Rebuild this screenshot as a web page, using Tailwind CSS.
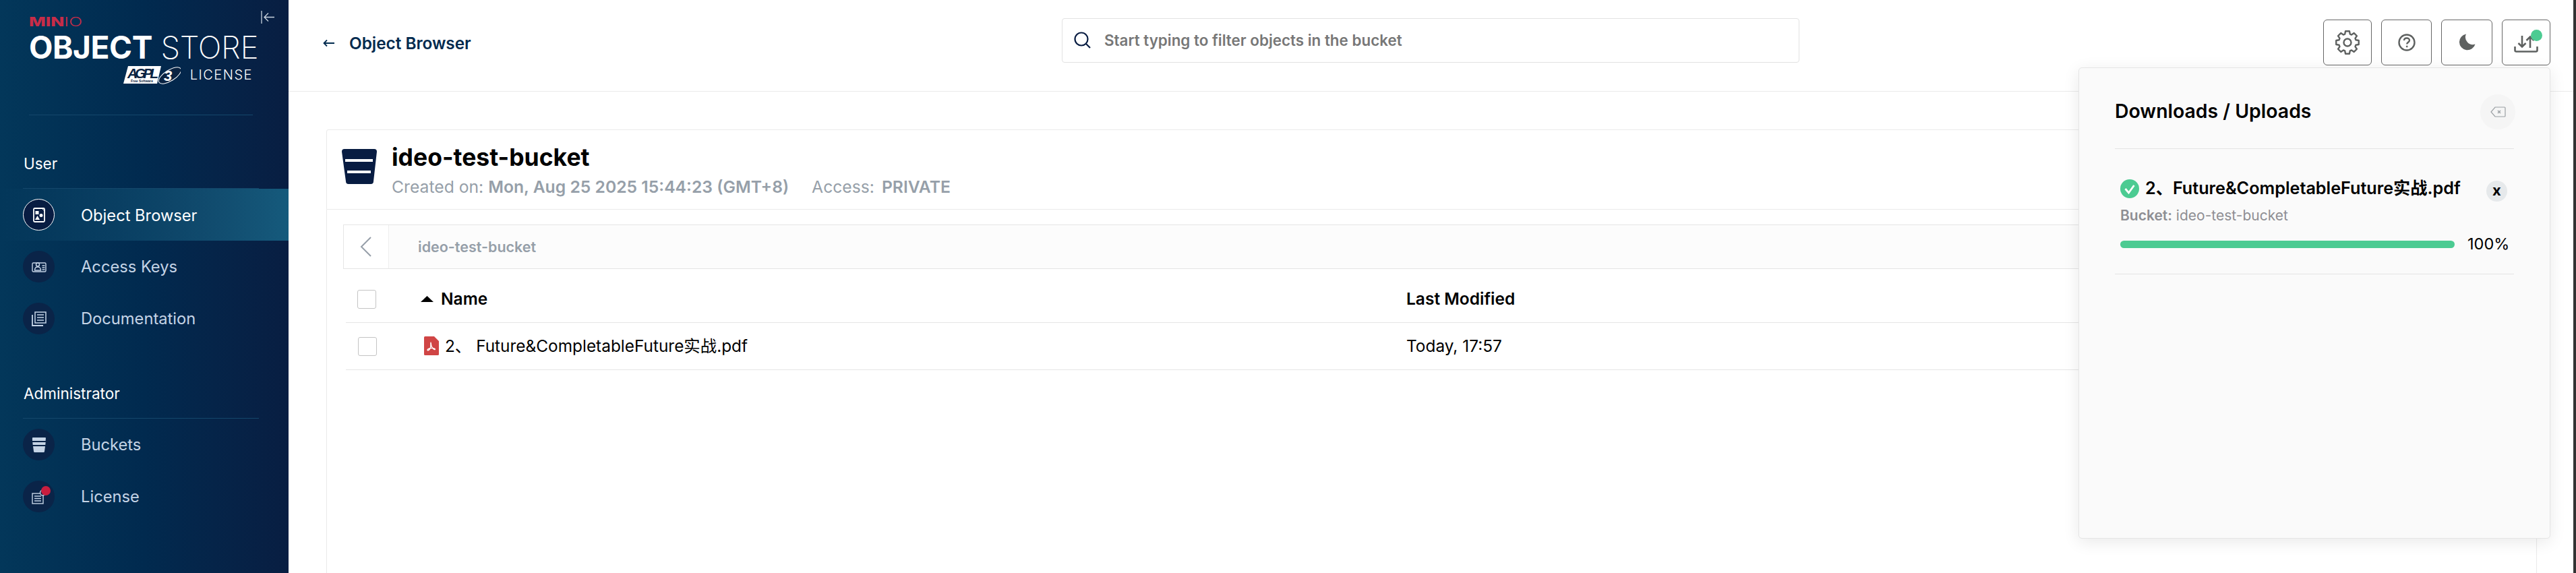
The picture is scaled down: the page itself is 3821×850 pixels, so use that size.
<!DOCTYPE html>
<html lang="en">
<head>
  <meta charset="UTF-8" />
  <title>MinIO Object Store</title>
  <script src="https://cdn.jsdelivr.net/npm/@tailwindcss/browser@4"></script>
</head>
<body class="bg-white font-['Inter','Noto_Sans_CJK_SC',sans-serif] text-black">

<div class="flex w-[3821px] h-[850px] overflow-hidden">

  <!-- SIDEBAR -->
  <aside class="relative w-[428px] h-full shrink-0 bg-linear-to-r from-[#03375a] via-[#012a4f] to-[#081e42] text-white">
    <!-- collapse -->
    <svg class="absolute left-[387px] top-[15px]" width="21" height="21" viewBox="0 0 21 21" fill="none" stroke="#c9d3de" stroke-width="1.3">
      <path d="M1 1v19M20 10.500H5M11 4.500l-6 6 6 6"/>
    </svg>

    <!-- logo -->
    <div class="ml-[43px] w-[332px] h-[171px] border-b border-[#14476b] pt-[24px]">
      <div class="h-[18px] leading-[18px] text-[19px] text-[#c72c48] origin-left scale-x-[1.38] font-extrabold whitespace-nowrap">MIN<span class="font-light">IO</span></div>
      <div class="mt-[6px] h-[44px] leading-[44px] text-[46px] whitespace-nowrap tracking-[-0.4px]"><span class="font-bold">OBJECT</span> <span class="font-extralight">STORE</span></div>
      <div class="flex justify-end items-center gap-[14px] mt-[5px]">
        <!-- AGPL badge -->
        <svg width="85" height="28" viewBox="0 0 85 28">
          <path d="M7 1H56L50 27H0Z" fill="#fff"/>
          <text x="6" y="19" font-family="Liberation Sans" font-style="italic" font-weight="700" font-size="21" fill="#0a2342" textLength="46">AGPL</text>
          <text x="11" y="25" font-family="Liberation Sans" font-weight="700" font-size="5" fill="#0a2342">Free Software</text>
          <ellipse cx="69" cy="15" rx="19" ry="8" transform="rotate(-32 69 15)" fill="#0a2342" stroke="#fff" stroke-width="1"/>
          <text x="60" y="23" font-family="Liberation Sans" font-style="italic" font-weight="700" font-size="22" fill="#fff">3</text>
        </svg>
        <span class="text-[20px] leading-[24px] tracking-[1.500px] font-light">LICENSE</span>
      </div>
    </div>

    <!-- User -->
    <div class="ml-[34px] w-[350px] h-[109px] border-b border-[#14476b] flex items-end pb-[21px] pl-[1px] text-[22.500px] leading-[30px]">User</div>

    <a class="relative flex items-center h-[77px] pl-[34px] bg-linear-to-r from-transparent to-[#155a7c] text-[23.700px] text-white">
      <span class="w-[47px] h-[47px] rounded-full bg-[#081c42] border border-white flex items-center justify-center mr-[39px]">
        <svg width="20" height="22" viewBox="0 0 20 22" fill="none">
          <rect x="2" y="1" width="16" height="20" rx="1.500" stroke="#fff" stroke-width="1.800"/>
          <rect x="4.500" y="5" width="5" height="5" fill="#fff"/>
          <circle cx="13" cy="11.500" r="2.500" fill="#fff"/>
          <path d="M7.500 12l3.500 6H4z" fill="#fff"/>
          <path d="M14 1l4 4" stroke="#fff"/>
        </svg>
      </span>
      <span class="mt-[2px]">Object Browser</span>
    </a>
    <a class="flex items-center h-[77px] pl-[34px] text-[23.700px] text-[#c5d4e6]">
      <span class="w-[47px] h-[47px] rounded-full bg-[#0a2448] flex items-center justify-center mr-[39px]">
        <svg width="22" height="16" viewBox="0 0 22 16" fill="none" stroke="#c5d4e6" stroke-width="1.400">
          <rect x="1" y="2" width="20" height="13" rx="1.500"/>
          <circle cx="9" cy="4.500" r="2.500" fill="#0a2448"/>
          <path d="M4.500 13c0-3.500 2-5 4.500-5s4.500 1.500 4.500 5z"/>
          <path d="M15.500 6h4M15.500 9h4M15.500 12h4"/>
        </svg>
      </span>
      <span class="mt-[1px]">Access Keys</span>
    </a>
    <a class="flex items-center h-[77px] pl-[34px] text-[23.700px] text-[#c5d4e6]">
      <span class="w-[47px] h-[47px] rounded-full bg-[#0a2448] flex items-center justify-center mr-[39px]">
        <svg width="22" height="22" viewBox="0 0 22 22" fill="none" stroke="#c5d4e6" stroke-width="1.500">
          <rect x="5" y="1" width="16" height="16"/>
          <path d="M8 5h10M8 9h10M8 13h10" />
          <path d="M1 5v16h16" stroke-width="1.800"/>
        </svg>
      </span>
      <span class="mt-[1px]">Documentation</span>
    </a>

    <!-- Administrator -->
    <div class="ml-[34px] w-[350px] h-[110px] border-b border-[#14476b] flex items-end pb-[21px] pl-[1px] text-[22.500px] leading-[30px]">Administrator</div>

    <a class="flex items-center h-[77px] pl-[34px] text-[23.700px] text-[#c5d4e6]">
      <span class="w-[47px] h-[47px] rounded-full bg-[#0a2448] flex items-center justify-center mr-[39px]">
        <svg width="22" height="22" viewBox="0 0 22 22" fill="#c5d4e6">
          <path d="M2 0h18a1 1 0 0 1 1 1l-.400 4H1L.900 1a1 1 0 0 1 1-1zM1.300 7h19.400l-.400 4H1.700zM2 13h18l-1 7.500a1.500 1.500 0 0 1-1.500 1.500h-13A1.500 1.500 0 0 1 3 20.500z"/>
        </svg>
      </span>
      Buckets
    </a>
    <a class="flex items-center h-[77px] pl-[34px] text-[23.700px] text-[#c5d4e6]">
      <span class="relative w-[47px] h-[47px] rounded-full bg-[#0a2448] flex items-center justify-center mr-[39px]">
        <svg width="22" height="22" viewBox="0 0 22 22" fill="none" stroke="#c5d4e6" stroke-width="1.400">
          <rect x="1" y="6" width="16" height="15"/>
          <path d="M4 10h10M4 13.500h10M4 17h10"/>
          <circle cx="16.500" cy="5" r="4" fill="#0a2448"/>
        </svg>
        <span class="absolute left-[27px] top-[8px] w-[14px] h-[14px] rounded-full bg-[#c81e3f]"></span>
      </span>
      License
    </a>
  </aside>

  <!-- MAIN -->
  <main class="relative flex-1 min-w-0 h-full">

    <!-- top bar -->
    <header class="h-[136px] border-b border-[#eaeaea] flex items-center pl-[50px] pr-[34px]">
      <div class="flex items-center w-[1097px] shrink-0 mt-[-7px] text-[#002a4e] font-semibold text-[24.300px]">
        <svg class="mr-[21px]" width="19" height="12" viewBox="0 0 19 12" fill="none" stroke="#002a4e" stroke-width="1.800"><path d="M18 6H3M7 1.500 2.500 6 7 10.500"/></svg>
        Object Browser
      </div>
      <div class="flex items-center w-[1094px] h-[66px] shrink-0 mt-[-16px] border border-[#e2e2e2] rounded-[4px] pl-[17px]">
        <svg class="mr-[20px]" width="25" height="25" viewBox="0 0 25 25" fill="none" stroke="#081c42" stroke-width="2.200"><circle cx="11" cy="11" r="9.500"/><path d="M18 18l6 6"/></svg>
        <span class="text-[22.400px] font-semibold text-[#777]">Start typing to filter objects in the bucket</span>
      </div>
      <div class="ml-auto flex gap-[14px] mt-[-10px]">
        <button class="w-[72px] h-[68px] border border-[#666] rounded-[6px] flex items-center justify-center">
          <svg width="36" height="36" viewBox="0 0 36 36" fill="none" stroke="#5e6160" stroke-width="2.400" stroke-linejoin="round">
            <polygon points="14.200,5.570 15.050,1.260 20.950,1.260 21.800,5.570 24.100,6.520 27.750,4.070 31.930,8.250 29.480,11.900 30.430,14.200 34.740,15.050 34.740,20.950 30.430,21.800 29.480,24.100 31.930,27.750 27.750,31.930 24.100,29.480 21.800,30.430 20.950,34.740 15.050,34.740 14.200,30.430 11.900,29.480 8.250,31.930 4.070,27.750 6.520,24.100 5.570,21.800 1.260,20.950 1.260,15.050 5.570,14.200 6.520,11.900 4.070,8.250 8.250,4.070 11.900,6.520"/>
            <circle cx="18" cy="18" r="5.500"/>
          </svg>
        </button>
        <button class="w-[75px] h-[68px] border border-[#666] rounded-[6px] flex items-center justify-center">
          <svg width="26" height="26" viewBox="0 0 26 26" fill="none" stroke="#5e6160" stroke-width="2.400">
            <circle cx="13" cy="13" r="11.500"/>
            <path d="M9 10c0-2.500 1.800-3.500 4-3.500s4 1.300 4 3.300c0 3-3.800 3-3.800 5.700"/>
            <circle cx="13.200" cy="19" r="1" fill="#5e6160" stroke-width="1"/>
          </svg>
        </button>
        <button class="w-[76px] h-[68px] border border-[#666] rounded-[6px] flex items-center justify-center">
          <svg width="25" height="25" viewBox="0 0 25 25" fill="#5e6160">
            <path d="M11 .500A12 12 0 1 0 24.500 15.500 11 11 0 0 1 11 .500z"/>
          </svg>
        </button>
        <button class="relative w-[72px] h-[68px] border border-[#666] rounded-[6px] flex items-center justify-center">
          <svg class="mt-[4px]" width="36" height="26" viewBox="0 0 36 26" fill="none" stroke="#5e6160" stroke-width="2.600">
            <path d="M1.500 17v5.500a2 2 0 0 0 2 2h29a2 2 0 0 0 2-2V17"/>
            <path d="M12 1v16M6.500 12l5.500 5.500 5.500-5.500"/>
            <path d="M24 19V3M18.500 8 24 2.500 29.500 8"/>
          </svg>
          <span class="absolute left-[42px] top-[14px] w-[17px] h-[17px] rounded-full bg-[#4ccb92]"></span>
        </button>
      </div>
    </header>

    <!-- bucket -->
    <div class="ml-[56px] mr-[54px] mt-[56px]">
      <section class="h-[119px] border border-[#eaeaea] rounded-t-[3px] flex items-start pl-[22px] pt-[28px]">
        <svg class="mr-[22px]" width="52" height="52" viewBox="0 0 52 52" fill="#081c42">
          <path d="M4 0h44a4 4 0 0 1 4 4l-5 44a4 4 0 0 1-4 4H10a4 4 0 0 1-4-4L0 4a4 4 0 0 1 4-4z"/>
          <rect x="5" y="15" width="41" height="4" fill="#fff"/>
          <rect x="8" y="32" width="35" height="4" fill="#fff"/>
        </svg>
        <div class="mt-[-10px]">
          <h1 class="text-[35.500px] leading-[46px] font-bold">ideo-test-bucket</h1>
          <p class="text-[24.700px] leading-[30px] mt-[5px] text-[#969fa9] whitespace-nowrap">
            Created on: <b class="font-semibold">Mon, Aug 25 2025 15:44:23 (GMT+8)</b>
            <span class="ml-[27px]">Access:</span> <b class="font-semibold ml-[4px]">PRIVATE</b>
          </p>
        </div>
        <div class="ml-auto mt-[-2px] w-[400px] h-[67px] bg-[#d2d4d3] border border-[#bbbdbc] rounded-[4px]"></div>
      </section>
      <section class="h-[539px] border-x border-[#eaeaea] pl-[24px] pr-[23px] pt-[22px]">
        <div class="flex items-stretch h-[66px] border border-[#e5e5e5] bg-[#fcfcfc]">
          <div class="w-[67px] bg-white border-r border-[#eeeeee] flex items-center justify-center">
            <svg width="18" height="30" viewBox="0 0 18 30" fill="none" stroke="#969fa9" stroke-width="2"><path d="M16 1 2 15l14 14"/></svg>
          </div>
          <span class="ml-[43px] self-center text-[21.500px] font-semibold text-[#969fa9]">ideo-test-bucket</span>
        </div>
        <div class="flex items-center h-[80px] pt-[10px] ml-[4px] border-b border-[#e5e5e5] font-semibold text-[24.500px]">
          <span class="ml-[17px] w-[28px] h-[28px] rounded-[3px] border border-[#c4c4c4]"></span>
          <span class="flex items-center w-[1462px] ml-[66px]">
            <svg class="mr-[11px]" width="19" height="9" viewBox="0 0 19 9"><path d="M9.500 0 19 9H0z"/></svg>
            Name
          </span>
          <span>Last Modified</span>
        </div>
        <div class="flex items-center h-[70px] ml-[4px] border-b border-[#e5e5e5] text-[24.400px]">
          <span class="ml-[18px] w-[28px] h-[28px] rounded-[3px] border border-[#c4c4c4]"></span>
          <span class="flex items-center w-[1457px] ml-[70px]">
            <svg class="mr-[9px]" width="22" height="28" viewBox="0 0 22 28">
              <path d="M1.500 0H15l7 7v19.500a1.500 1.500 0 0 1-1.500 1.500h-19A1.500 1.500 0 0 1 0 26.500v-25A1.500 1.500 0 0 1 1.500 0z" fill="#d04545"/>
              <path d="M10.500 9c-1.500 0 .5 5-1.500 9-1.500 3-4 3.500-4 2s5-3 8-2.500 4 1.500 3 2c-1.500.5-3.500-2-5-5-.6-1.800-1-5.500-.5-5.500z" fill="none" stroke="#fff" stroke-width="1.400"/>
            </svg>
            2、 Future&amp;CompletableFuture实战.pdf
          </span>
          <span>Today, 17:57</span>
        </div>
      </section>
    </div>

    <!-- downloads panel -->
    <div class="absolute right-[34px] top-[100px] w-[700px] h-[699px] bg-[#fafafa] border border-[#e5e5e5] rounded-[5px] shadow-[0_5px_24px_rgba(0,0,0,0.09)] px-[53px]">
      <div class="flex items-center justify-between h-[120px] border-b border-[#e4e4e4]">
        <h2 class="text-[28.400px] font-semibold mt-[10px]">Downloads / Uploads</h2>
        <span class="w-[52px] h-[52px] mr-[-2px] mt-[10px] rounded-full bg-[#f5f5f5] flex items-center justify-center">
          <svg width="23" height="16" viewBox="0 0 23 16" fill="none" stroke="#9a9fa3" stroke-width="1.200">
            <path d="M7 1h14a1 1 0 0 1 1 1v12a1 1 0 0 1-1 1H7L1 8z"/>
            <path d="M11 6l4 4M15 6l-4 4" stroke-width="1.400"/>
          </svg>
        </span>
      </div>
      <div class="h-[186px] border-b border-[#e4e4e4] pl-[8px] pt-[44px]">
        <div class="flex items-center h-[30px]">
          <svg class="mr-[9px]" width="28" height="28" viewBox="0 0 28 28" fill="none">
            <circle cx="14" cy="14" r="14" fill="#4ccb92"/>
            <path d="M7.500 14l5 6 8-11" stroke="#fff" stroke-width="2.800"/>
          </svg>
          <span class="w-[467px] shrink-0 text-[25.200px] font-semibold whitespace-nowrap">2、Future&amp;CompletableFuture实战.pdf</span>
          <span class="ml-[39px] mt-[6px] w-[31px] h-[31px] shrink-0 rounded-full bg-[#e6e9eb] flex items-center justify-center text-[22px] leading-none font-bold pb-[3px]">x</span>
        </div>
        <p class="mt-[12px] text-[21px] leading-[26px] text-[#8e8e93]"><b class="font-semibold">Bucket:</b> ideo-test-bucket</p>
        <div class="flex items-center mt-[15px]">
          <div class="w-[496px] h-[11px] rounded-[6px] bg-[#4ccb92]"></div>
          <span class="ml-[19px] text-[23.500px] leading-[28px]">100%</span>
        </div>
      </div>
    </div>
  </main>

  <!-- scrollbar strip -->
  <div class="w-[4px] h-full bg-[#333] shrink-0"></div>
</div>

</body>
</html>
